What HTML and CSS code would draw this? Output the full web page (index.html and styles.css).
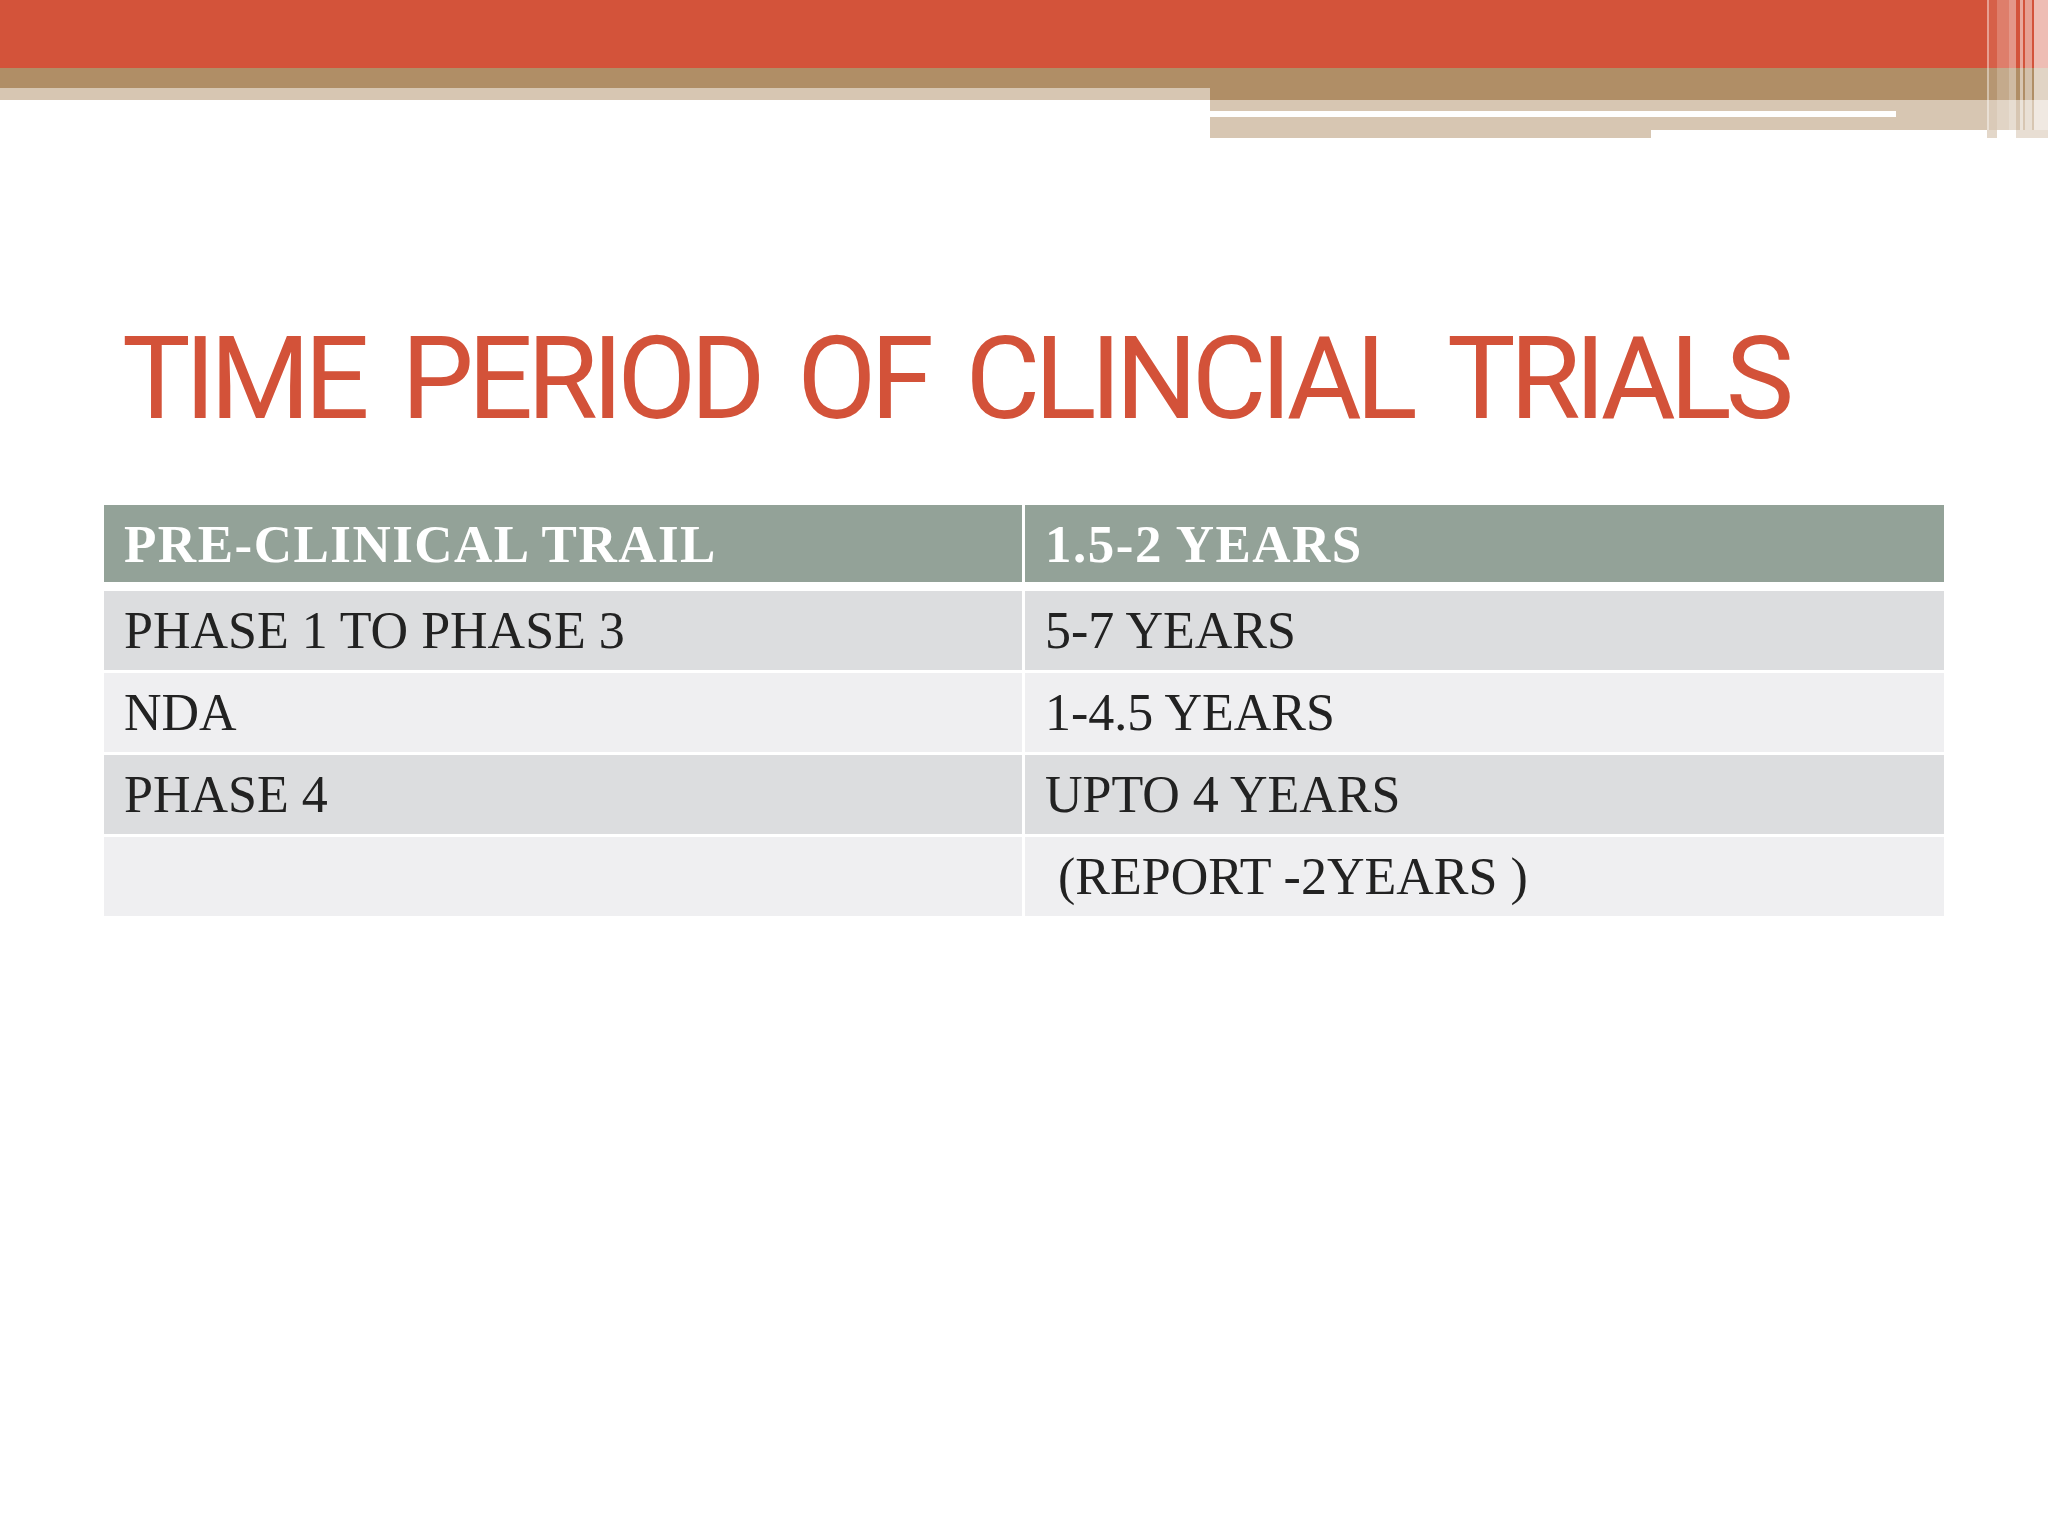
FILE: index.html
```html
<!DOCTYPE html>
<html lang="en">
<head>
<meta charset="utf-8">
<title>Time Period of Clinical Trials</title>
<link rel="stylesheet" href="styles.css">
</head>
<body>
<div class="slide">
  <svg class="banner" viewBox="0 0 2048 140" width="2048" height="140" aria-hidden="true">
    <rect x="0" y="0" width="2048" height="68" fill="#D3533A"/>
    <rect x="0" y="68" width="1210" height="20" fill="#B08E66"/>
    <rect x="1210" y="68" width="838" height="32" fill="#B08E66"/>
    <rect x="0" y="88" width="1210" height="12" fill="#D7C6B2"/>
    <rect x="1210" y="100" width="838" height="30" fill="#D7C6B2"/>
    <rect x="1210" y="130" width="441" height="8" fill="#D7C6B2"/>
    <rect x="1210" y="111" width="686" height="6" fill="#FFFFFF"/>
    <g fill="#FFFFFF">
      <rect x="1987" y="0" width="2" height="130" opacity="0.45"/>
      <rect x="1989" y="0" width="8" height="130" opacity="0.08"/>
      <rect x="1997" y="0" width="12" height="130" opacity="0.25"/>
      <rect x="2009" y="0" width="7" height="130" opacity="0.4"/>
      <rect x="2020" y="0" width="3" height="130" opacity="0.5"/>
      <rect x="2025" y="0" width="7" height="130" opacity="0.45"/>
      <rect x="2034" y="0" width="14" height="130" opacity="0.62"/>
    </g>
    <rect x="1987" y="130" width="10" height="8" fill="#D7C6B2" opacity="0.7"/>
    <rect x="2016" y="130" width="32" height="8" fill="#E8DED3"/>
  </svg>

  <h1 class="title">TIME PERIOD OF CLINCIAL TRIALS</h1>

  <div class="table">
    <div class="row head">
      <div class="cell">PRE-CLINICAL TRAIL</div>
      <div class="cell">1.5-2 YEARS</div>
    </div>
    <div class="row dark">
      <div class="cell">PHASE 1 TO PHASE 3</div>
      <div class="cell">5-7 YEARS</div>
    </div>
    <div class="row light">
      <div class="cell">NDA</div>
      <div class="cell">1-4.5 YEARS</div>
    </div>
    <div class="row dark">
      <div class="cell">PHASE 4</div>
      <div class="cell">UPTO 4 YEARS</div>
    </div>
    <div class="row light">
      <div class="cell"></div>
      <div class="cell">&nbsp;(REPORT -2YEARS )</div>
    </div>
  </div>
</div>
</body>
</html>
```

FILE: styles.css
```css
html, body {
  margin: 0;
  padding: 0;
  background: #FFFFFF;
}

.slide {
  width: 2048px;
  height: 1536px;
  overflow: hidden;
  background: #FFFFFF;
}

.banner {
  display: block;
  width: 2048px;
  height: 140px;
}

.title {
  margin: 181px 0 0 0;
  padding-left: 122px;
  font-family: Roboto, "Liberation Sans", sans-serif;
  font-weight: 400;
  font-size: 115px;
  line-height: 115px;
  letter-spacing: -6px;
  word-spacing: 15px;
  color: #D35239;
  white-space: nowrap;
}

.table {
  margin: 69px 0 0 104px;
  width: 1840px;
  display: flex;
  flex-direction: column;
  gap: 3px;
}

.row {
  display: grid;
  grid-template-columns: 918px 919px;
  column-gap: 3px;
  height: 79px;
}

.row.head {
  height: 77px;
  margin-bottom: 6px;
}

.cell {
  display: flex;
  align-items: center;
  padding-left: 20px;
  font-family: "Liberation Serif", "Times New Roman", serif;
  font-size: 52px;
  color: #222222;
  white-space: pre;
}

.head .cell {
  background: #93A298;
  color: #FFFFFF;
  font-weight: 700;
  font-size: 53px;
  letter-spacing: 1.5px;
}

.dark .cell {
  background: #DCDDDF;
}

.light .cell {
  background: #EFEFF1;
}
```
